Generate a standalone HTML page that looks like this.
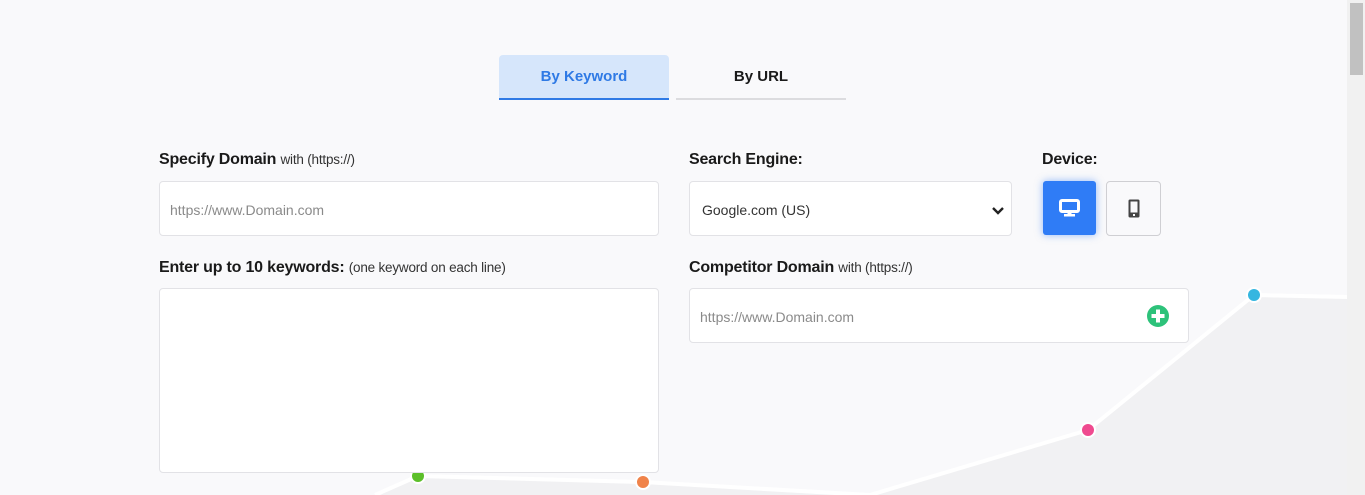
<!DOCTYPE html>
<html><head><meta charset="utf-8"><style>
*{box-sizing:border-box;margin:0;padding:0}
body{width:1365px;height:495px;overflow:hidden;background:#f9f9fb;font-family:"Liberation Sans",sans-serif;position:relative}
.a{position:absolute}
.lbl{font-weight:bold;font-size:16px;color:#1a1a1a;letter-spacing:-0.2px}
.lbl span{font-weight:normal;font-size:13.5px;color:#333}
.box{background:#fff;border:1px solid #e2e2e6;border-radius:4px}
.ph{font-size:14px;color:#8a8a8a}
</style></head><body>
<svg class="a" style="left:0;top:0" width="1365" height="495">
<polygon points="375,495 418,476 643,482 870,495" fill="#f1f1f3"/>
<polygon points="870,495 1088,430 1254,295 1348,297 1348,495" fill="#f1f1f3"/>
<polyline points="375,495 418,476 643,482 870,495 1088,430 1254,295 1348,297" fill="none" stroke="#fff" stroke-width="4"/>
<circle cx="418" cy="476" r="8" fill="#fff"/><circle cx="418" cy="476" r="6" fill="#5cbf2a"/>
<circle cx="643" cy="482" r="8" fill="#fff"/><circle cx="643" cy="482" r="6" fill="#f0834a"/>
<circle cx="1088" cy="430" r="8" fill="#fff"/><circle cx="1088" cy="430" r="6" fill="#ef4a8f"/>
<circle cx="1254" cy="295" r="8" fill="#fff"/><circle cx="1254" cy="295" r="6" fill="#35b6e0"/>
</svg>
<div class="a" style="left:1347px;top:0;width:18px;height:495px;background:#f1f1f1"></div>
<div class="a" style="left:1350px;top:3px;width:13px;height:72px;background:#c1c1c1"></div>

<div class="a" style="left:499px;top:55px;width:170px;height:45px;background:#d6e6fb;border-radius:4px 4px 0 0;border-bottom:2px solid #2f7ae5;text-align:center;line-height:44px;font-weight:bold;font-size:15px;color:#2f7ae5">By Keyword</div>
<div class="a" style="left:676px;top:55px;width:170px;height:45px;border-bottom:2px solid #dcdcdf;text-align:center;line-height:44px;font-weight:bold;font-size:15px;color:#1a1a1a">By URL</div>

<div class="a lbl" style="left:159px;top:151px">Specify Domain <span>with (https://)</span></div>
<div class="a box" style="left:159px;top:181px;width:500px;height:55px"><div class="a ph" style="left:10px;top:20px">https://www.Domain.com</div></div>
<div class="a lbl" style="left:159px;top:259px">Enter up to 10 keywords: <span>(one keyword on each line)</span></div>
<div class="a box" style="left:159px;top:288px;width:500px;height:185px"></div>

<div class="a lbl" style="left:689px;top:151px">Search Engine:</div>
<div class="a box" style="left:689px;top:181px;width:323px;height:55px"><div class="a" style="left:12px;top:20px;font-size:14px;color:#333">Google.com (US)</div>
<svg class="a" style="left:302px;top:25px" width="12" height="8"><polyline points="1,1 6,6 11,1" fill="none" stroke="#222" stroke-width="2.4"/></svg></div>
<div class="a lbl" style="left:1042px;top:151px">Device:</div>
<div class="a" style="left:1043px;top:181px;width:53px;height:54px;background:#2f7cf6;border-radius:3px;box-shadow:0 0 8px rgba(47,124,246,.5)">
<svg class="a" style="left:16px;top:18px" width="21" height="18"><rect x="1.5" y="1.5" width="18" height="11" rx="1.5" fill="none" stroke="#fff" stroke-width="3"/><rect x="8.5" y="13" width="4" height="3" fill="#fff"/><rect x="5" y="15" width="11" height="2.5" fill="#fff"/></svg></div>
<div class="a box" style="left:1106px;top:181px;width:55px;height:55px;background:#f9f9fb;border-color:#cfcfd3">
<svg class="a" style="left:21px;top:17px" width="12" height="19"><rect x="0.5" y="0.5" width="11" height="18" rx="1.5" fill="#444"/><rect x="2.5" y="2.5" width="7" height="11" fill="#f9f9fb"/><rect x="5" y="15" width="2" height="2" fill="#f9f9fb"/></svg></div>

<div class="a lbl" style="left:689px;top:259px">Competitor Domain <span>with (https://)</span></div>
<div class="a box" style="left:689px;top:288px;width:500px;height:55px"><div class="a ph" style="left:10px;top:20px">https://www.Domain.com</div>
<svg class="a" style="left:457px;top:16px" width="22" height="22"><circle cx="11" cy="11" r="11" fill="#2dc27a"/><rect x="4.5" y="9" width="13" height="4" fill="#fff"/><rect x="9" y="4.5" width="4" height="13" fill="#fff"/></svg></div>
</body></html>
